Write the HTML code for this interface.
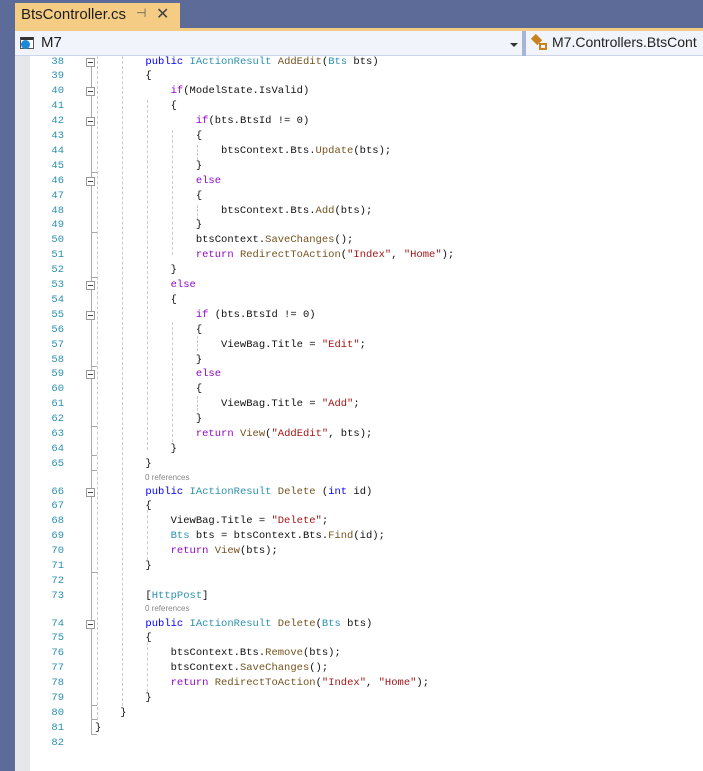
<!DOCTYPE html>
<html><head><meta charset="utf-8"><style>
*{margin:0;padding:0;box-sizing:border-box}
body{width:703px;height:771px;background:#fff;position:relative;overflow:hidden;font-family:"Liberation Sans",sans-serif}
.abs{position:absolute}
.ln{position:absolute;left:30px;width:34px;text-align:right;font:10.5px/15px "Liberation Mono",monospace;color:#2b91af}
.cd{position:absolute;left:95px;white-space:pre;font:10.5px/15px "Liberation Mono",monospace;color:#111}
.ref{position:absolute;left:145px;font:8px/10px "Liberation Sans",sans-serif;color:#888}
.k{color:#0000ff}.t{color:#2b91af}.m{color:#74531f}.s{color:#a31515}.c{color:#8f08c4}
.g{position:absolute;width:0;border-left:1px dashed #ccc}
.fb{position:absolute;left:86px;width:9px;height:9px;border:1px solid #999;background:#fff}
.fb:after{content:"";position:absolute;left:1px;top:3px;width:5px;height:1px;background:#444}
.tk{position:absolute;left:91px;width:6px;height:1px;background:#aaa}
</style></head><body>
<div class="abs" style="left:0;top:0;width:703px;height:30px;background:#5d6b99"></div>
<div class="abs" style="left:0;top:0;width:15px;height:771px;background:#5d6b99"></div>
<div class="abs" style="left:15px;top:3px;width:165px;height:27px;background:#f5cc84"></div>
<div class="abs" style="left:21px;top:6px;font-size:15px;color:#1e1e1e">BtsController.cs</div>
<div class="abs" style="left:136px;top:6px;font-size:12px;color:#555">&#8867;</div>
<div class="abs" style="left:156px;top:4px;font-size:16px;color:#444">✕</div>
<div class="abs" style="left:15px;top:28px;width:688px;height:3px;background:#f5cc84"></div>
<div class="abs" style="left:15px;top:31px;width:688px;height:25px;background:#f1f4fb;border-bottom:1px solid #ccd4e8"></div>
<div class="abs" style="left:20px;top:37px;width:14px;height:12px;border:1px solid #555;border-top:3px solid #333;background:#fff"></div>
<div class="abs" style="left:21px;top:40px;width:9px;height:9px;border-radius:50%;background:#1e88d8"></div>
<div class="abs" style="left:41px;top:34px;font-size:15px;color:#1e1e1e">M7</div>
<div class="abs" style="left:510px;top:43px;width:0;height:0;border-left:4px solid transparent;border-right:4px solid transparent;border-top:4px solid #333"></div>
<div class="abs" style="left:522px;top:31px;width:4px;height:25px;background:#a6b4d6"></div>
<div class="abs" style="left:532px;top:36px;width:9px;height:7px;background:#c8821e;transform:rotate(45deg)"></div>
<div class="abs" style="left:539px;top:43px;width:8px;height:7px;border:2px solid #c8821e"></div>
<div class="abs" style="left:552px;top:34px;font-size:14px;color:#1e1e1e;white-space:nowrap">M7.Controllers.BtsCont</div>
<div class="abs" style="left:15px;top:56px;width:15px;height:715px;background:#e6e7e8"></div>
<div class="abs" style="left:91px;top:62px;width:1px;height:672px;background:#aaa"></div>
<div class="g" style="left:97px;top:56px;height:664px"></div>
<div class="g" style="left:122px;top:56px;height:650px"></div>
<div class="g" style="left:147px;top:100px;height:350px"></div>
<div class="g" style="left:147px;top:510px;height:50px"></div>
<div class="g" style="left:147px;top:642px;height:50px"></div>
<div class="g" style="left:172px;top:130px;height:125px"></div>
<div class="g" style="left:172px;top:322px;height:120px"></div>
<div class="g" style="left:197px;top:145px;height:15px"></div>
<div class="g" style="left:197px;top:205px;height:15px"></div>
<div class="g" style="left:197px;top:336px;height:15px"></div>
<div class="g" style="left:197px;top:396px;height:15px"></div>
<div id="c"></div>
<script>
var L=[
[38,8,'<span class="k">public</span> <span class="t">IActionResult</span> <span class="m">AddEdit</span>(<span class="t">Bts</span> bts)',1],
[39,8,'{'],
[40,12,'<span class="c">if</span>(ModelState.IsValid)',1],
[41,12,'{'],
[42,16,'<span class="c">if</span>(bts.BtsId != 0)',1],
[43,16,'{'],
[44,20,'btsContext.Bts.<span class="m">Update</span>(bts);'],
[45,16,'}',0,1],
[46,16,'<span class="c">else</span>',1],
[47,16,'{'],
[48,20,'btsContext.Bts.<span class="m">Add</span>(bts);'],
[49,16,'}',0,1],
[50,16,'btsContext.<span class="m">SaveChanges</span>();'],
[51,16,'<span class="c">return</span> <span class="m">RedirectToAction</span>(<span class="s">"Index"</span>, <span class="s">"Home"</span>);'],
[52,12,'}',0,1],
[53,12,'<span class="c">else</span>',1],
[54,12,'{'],
[55,16,'<span class="c">if</span> (bts.BtsId != 0)',1],
[56,16,'{'],
[57,20,'ViewBag.Title = <span class="s">"Edit"</span>;'],
[58,16,'}',0,1],
[59,16,'<span class="c">else</span>',1],
[60,16,'{'],
[61,20,'ViewBag.Title = <span class="s">"Add"</span>;'],
[62,16,'}',0,1],
[63,16,'<span class="c">return</span> <span class="m">View</span>(<span class="s">"AddEdit"</span>, bts);'],
[64,12,'}',0,1],
[65,8,'}',0,1],
[66,8,'<span class="k">public</span> <span class="t">IActionResult</span> <span class="m">Delete</span> (<span class="k">int</span> id)',1],
[67,8,'{'],
[68,12,'ViewBag.Title = <span class="s">"Delete"</span>;'],
[69,12,'<span class="t">Bts</span> bts = btsContext.Bts.<span class="m">Find</span>(id);'],
[70,12,'<span class="c">return</span> <span class="m">View</span>(bts);'],
[71,8,'}',0,1],
[72,0,''],
[73,8,'[<span class="t">HttpPost</span>]'],
[74,8,'<span class="k">public</span> <span class="t">IActionResult</span> <span class="m">Delete</span>(<span class="t">Bts</span> bts)',1],
[75,8,'{'],
[76,12,'btsContext.Bts.<span class="m">Remove</span>(bts);'],
[77,12,'btsContext.<span class="m">SaveChanges</span>();'],
[78,12,'<span class="c">return</span> <span class="m">RedirectToAction</span>(<span class="s">"Index"</span>, <span class="s">"Home"</span>);'],
[79,8,'}',0,1],
[80,4,'}',0,1],
[81,0,'}',0,1],
[82,0,'']];
var h='';
function cy(n){if(n<=65)return 62+(n-38)*14.9;if(n<=73)return 492+(n-66)*14.86;return 624+(n-74)*14.9;}
L.forEach(function(l){var y=cy(l[0]),t=(y-7.5).toFixed(1);
h+='<div class="ln" style="top:'+t+'px">'+l[0]+'</div>';
h+='<div class="cd" style="top:'+t+'px">'+' '.repeat(l[1])+l[2]+'</div>';
if(l[3])h+='<div class="fb" style="top:'+(y-4.5).toFixed(1)+'px"></div>';
if(l[4])h+='<div class="tk" style="top:'+(y+6).toFixed(1)+'px"></div>';});
h+='<div class="ref" style="top:473px">0 references</div><div class="ref" style="top:604px">0 references</div>';
document.getElementById('c').innerHTML=h;
</script>
</body></html>
